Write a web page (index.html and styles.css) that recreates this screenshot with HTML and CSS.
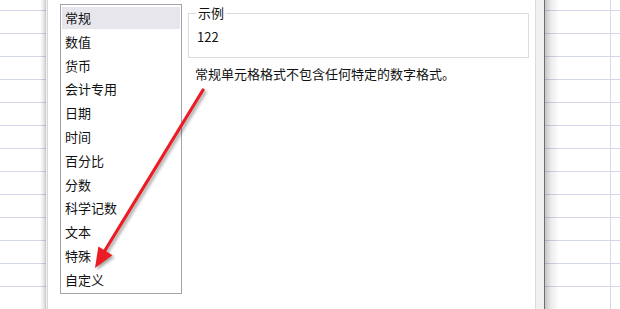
FILE: index.html
```html
<!DOCTYPE html>
<html lang="zh-CN">
<head>
<meta charset="utf-8">
<title>设置单元格格式</title>
<link rel="stylesheet" href="styles.css">
</head>
<body>
<div class="screen">
  <div class="sheet sheet-left"></div>
  <div class="dialog">
    <div class="dialog-body">
      <ul class="category-list">
        <li class="item selected">常规</li>
        <li class="item">数值</li>
        <li class="item">货币</li>
        <li class="item">会计专用</li>
        <li class="item">日期</li>
        <li class="item">时间</li>
        <li class="item">百分比</li>
        <li class="item">分数</li>
        <li class="item">科学记数</li>
        <li class="item">文本</li>
        <li class="item">特殊</li>
        <li class="item">自定义</li>
      </ul>
      <div class="panel">
        <fieldset class="sample">
          <legend class="sample-title">示例</legend>
          <div class="sample-value">122</div>
        </fieldset>
        <p class="desc">常规单元格格式不包含任何特定的数字格式。</p>
      </div>
    </div>
    <div class="dialog-edge"></div>
  </div>
  <div class="sheet sheet-right"></div>
  <svg class="arrow" width="620" height="309" viewBox="0 0 620 309">
    <g class="arrow-shape">
      <line x1="203" y1="90" x2="104" y2="252" stroke="#ec1c24" stroke-width="3.2" stroke-linecap="round"/>
      <polygon points="95,268 98.4,246.5 112.4,255.2" fill="#ec1c24"/>
    </g>
  </svg>
</div>
</body>
</html>
```
FILE: styles.css
```css
* { box-sizing: border-box; }
html, body { margin: 0; padding: 0; background: #ffffff; }
body {
  font-family: "Noto Sans CJK SC", "Noto Sans", sans-serif;
  font-size: 13px;
  color: #111111;
}
.screen {
  position: relative;
  width: 620px;
  height: 309px;
  overflow: hidden;
  display: flex;
}
.sheet {
  height: 309px;
  background-color: #fff;
}
.sheet-left {
  width: 46px;
  background-image:
    linear-gradient(90deg, rgba(0,0,0,0) 0, rgba(0,0,0,0) 40px, rgba(0,0,0,0.10) 44px, rgba(0,0,0,0.22) 46px),
    repeating-linear-gradient(180deg, transparent 0, transparent 10px, #d3d7ea 10px, #d3d7ea 11px, transparent 11px, transparent 23px);
}
.sheet-right {
  width: 75px;
  background-image:
    linear-gradient(90deg, rgba(0,0,0,0.22) 0, rgba(0,0,0,0.08) 6px, rgba(0,0,0,0) 14px),
    linear-gradient(90deg, transparent 0, transparent 65px, #d3d7ea 65px, #d3d7ea 66px, transparent 66px),
    repeating-linear-gradient(180deg, transparent 0, transparent 10px, #d3d7ea 10px, #d3d7ea 11px, transparent 11px, transparent 23px);
}
.dialog {
  width: 499px;
  height: 309px;
  display: flex;
  background: #fff;
  box-shadow: inset 1px 0 #f0f0f0, inset 2px 0 #d8d8d8;
}
.dialog-body {
  flex: 1;
  display: flex;
  align-items: flex-start;
  padding: 4px 0 0 14px;
}
.dialog-edge {
  width: 10px;
  height: 309px;
  background: #f0f0f0;
  border-left: 1px solid #dcdcdc;
  border-right: 1px solid #6e6e6e;
}
.category-list {
  list-style: none;
  margin: 0;
  padding: 2px 1px;
  width: 122px;
  height: 290px;
  border: 1px solid #a2a4ac;
  overflow: hidden;
}
.item {
  height: 23.8px;
  line-height: 22px;
  padding-left: 3px;
  white-space: nowrap;
}
.selected {
  background: #e6e6ec;
  height: 22px;
  margin-bottom: 1.8px;
}
.panel {
  margin-left: 6px;
  width: 341px;
  padding-top: 1px;
}
.sample {
  margin: 0;
  padding: 6px 6px 4px 7px;
  border: 1px solid #dcdcdc;
  height: 53px;
}
.sample-title {
  padding: 0 2px;
  line-height: 16px;
  font-size: 13px;
}
.sample-value {
  line-height: 20px;
  padding-left: 1px;
}
.desc {
  margin: 7px 0 0 7px;
  line-height: 18px;
  white-space: nowrap;
}
.arrow {
  position: absolute;
  left: 0;
  top: 0;
  pointer-events: none;
}
.arrow-shape {
  filter: drop-shadow(2px 2px 1.5px rgba(0,0,0,0.35));
}
```
